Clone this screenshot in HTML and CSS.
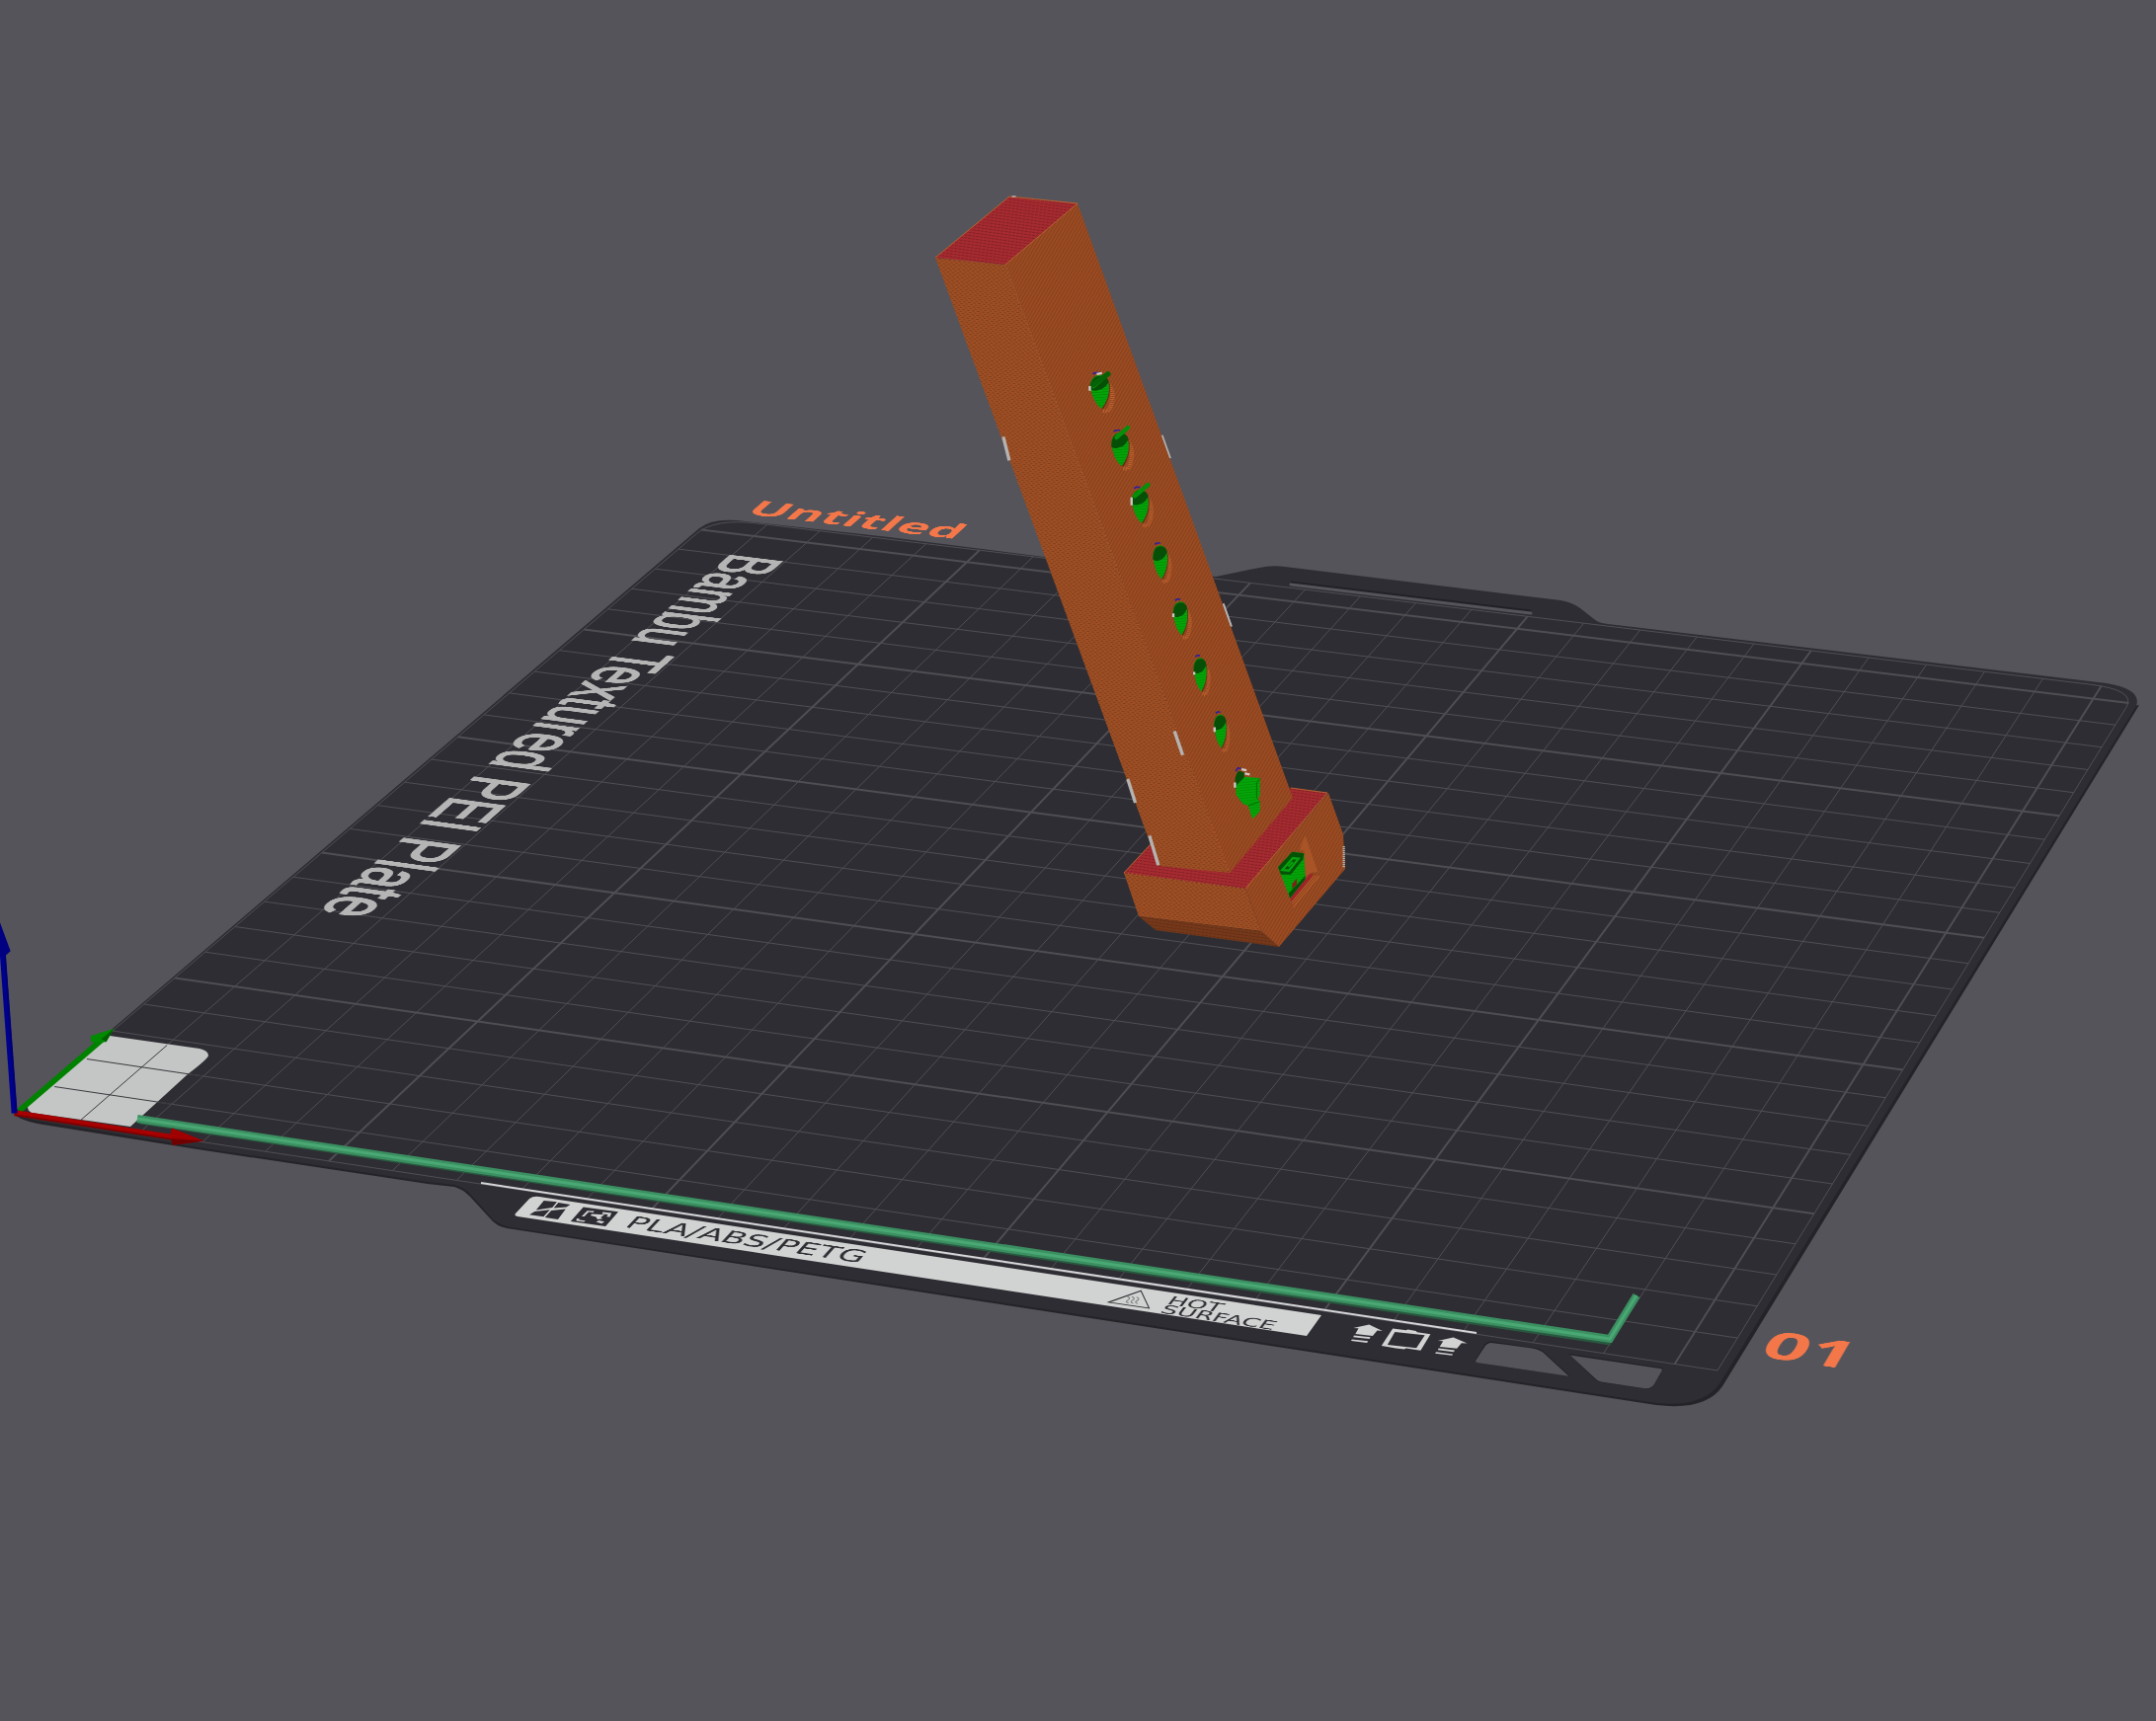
FILE: index.html
```html
<!DOCTYPE html>
<html lang="en">

<head>
  <meta charset="UTF-8">
  <title>Untitled</title>
  <link rel="stylesheet" href="styles.css">
</head>

<body>
  <main id="scene">
    <svg id="view" viewBox="0 0 2183 1743" aria-hidden="true">
      <defs>
        <pattern id="brick" width="5" height="4" patternUnits="userSpaceOnUse" patternTransform="rotate(7)">
          <rect width="5" height="4" fill="#a04f24" />
          <path d="M0 .5H3M2.500 2.500H5" stroke="#7d3f1d" />
        </pattern>
        <pattern id="layers" width="4" height="3" patternUnits="userSpaceOnUse" patternTransform="rotate(-60)">
          <rect width="4" height="3" fill="#9b4b22" />
          <path d="M0 .5H4" stroke="#86411d" />
        </pattern>
        <pattern id="top" width="4" height="3" patternUnits="userSpaceOnUse" patternTransform="rotate(8)">
          <rect width="4" height="3" fill="#a52b30" />
          <path d="M0 .5H3" stroke="#842027" />
        </pattern>
        <pattern id="under" width="4" height="3" patternUnits="userSpaceOnUse" patternTransform="rotate(8)">
          <rect width="4" height="3" fill="#75381a" />
          <path d="M0 .5H3" stroke="#642f15" />
        </pattern>
        <pattern id="support" width="6" height="8" patternUnits="userSpaceOnUse" patternTransform="rotate(-6)">
          <rect width="6" height="8" fill="#04a508" />
          <path d="M0 1H6" stroke="#048307" stroke-width="2" />
        </pattern>
        <g id="hole">
          <path class="rim" d="M16 -30Q30 -8 30 14Q28 50 18 60L8 58" />
          <path d="M-22 -20Q-20 -50 2 -51Q20 -48 24 -20Q26 20 8 53Q-18 30 -22 -20Z" fill="#5f2d14" />
          <path d="M-22 -20Q-20 -50 2 -51Q20 -48 22 -16Q24 20 4 52Q-18 30 -22 -20Z" fill="url(#support)" />
          <path d="M-22 -15Q-20 -48 0 -48Q18 -48 21 -30Q12 -8 -2 -6Q-12 0 -22 -8Z" fill="#064f07" />
          <path d="M-16 -54L-10 -58L0 -58" class="overhang" />
        </g>
      </defs>

      <!-- build plate -->
      <path class="plate-side" d="M14 1129Q26 1137 50 1140L200 1164L433 1199L460 1202Q468 1204 476 1212L499 1237Q506 1244 520 1245L1000 1319L1677 1423Q1727 1429 1744 1404L2166 714Z" />
      <path class="plate" d="M14 1127L708 535Q720 525 746 527L900 544L1057 564L1231 584L1275 575Q1288 572 1301 574L1580 608Q1592 610 1600 616L1614 627Q1618 631 1628 632L2133 692Q2169 698 2163 715L1742 1400Q1725 1426 1677 1421L1000 1317L517 1243Q505 1240 499 1235L475 1208Q468 1202 460 1200L433 1197L200 1162L50 1137Q26 1134 14 1127Z" />
      <path class="slot-shade" d="M1307 590L1550 619" />
      <path class="slot" d="M1307 592L1550 621" />

      <path id="gridThin" class="grid-thin" />
      <path id="gridBold" class="grid-bold" />

      <path class="patch" d="M111 1049L202 1062Q211 1064 211 1069Q211 1072 190 1088L132 1141L32 1127Q27 1124 28 1119Z" />
      <path id="gridPatch" class="grid-patch" />

      <!-- excluded area marker -->
      <path class="border-shade" d="M142 1136L1631 1360" />
      <path class="border" d="M139 1133L1630 1356L1657 1312" />
      <path class="border-shine" d="M139 1133L1630 1356L1657 1312" />

      <!-- front label strip -->
      <path class="front-line" d="M487 1198L1495 1350" />
      <path class="strip" d="M546 1212L1338 1332L1323 1353L524 1232Q520 1231 522 1229L536 1214Q540 1211 546 1212Z" />
      <g transform="translate(440 1160) scale(.357 .333)">
        <path class="ink" d="M310 168L347 172L334 189L288 197ZM284 201L327 196L309 217L269 211ZM351 174L385 180L374 188L338 191ZM331 198L372 194L350 225L313 219Z" />
        <path class="ink" d="M422 188L521 202L485 246L386 231Z" />
        <path class="chalk" d="M433 199L453 200L450 204L437 203L425 216L417 216ZM477 203L502 206L497 218L488 217L492 210L475 209ZM403 222L411 223L410 227L428 229L424 233L402 230ZM446 209L482 211L471 219L477 223L462 225L458 218L442 213ZM458 233L466 228L482 232L474 238Z" />
      </g>
      <g transform="translate(1000 1240) scale(.357 .333)">
        <path class="hot" d="M435 202L343 237L458 255Z" />
        <path class="steam" d="M396 219Q408 224 398 230T400 239M409 220Q421 225 411 231T413 240M422 221Q434 226 424 232T426 241" />
        <path class="chalk" d="M1082 305L1120 324L1105 323L1092 339L1043 333L1052 316L1037 315ZM1039 338L1086 343L1083 348L1037 343ZM1033 350L1079 355L1076 360L1031 354Z" />
        <path class="chalk" d="M1321 344L1360 362L1344 361L1331 378L1282 372L1292 355L1277 354ZM1279 377L1325 383L1322 388L1277 382ZM1272 388L1320 395L1317 399L1269 393Z" />
        <path class="chalk" fill-rule="evenodd" d="M1149 317L1187 322L1192 320L1215 324L1218 328L1256 334L1228 384L1186 377L1182 380L1158 377L1117 369ZM1155 327L1134 366L1216 376L1240 337Z" />
      </g>
      <g transform="translate(1400 1260) scale(.333)">
        <path class="cut-edge" d="M330 296L450 314Q475 316 487 325L570 402L290 361Q278 359 283 350L309 308Q316 297 330 296ZM566 333L850 376Q853 379 848 386L828 424Q818 443 798 440L660 420Q650 416 646 412Z" />
        <path class="cut" d="M330 300L450 316Q475 320 487 329L566 402L290 361Q278 359 284 352L311 311Q318 300 330 300ZM570 338L848 379Q851 382 847 388L826 426Q816 441 798 439L664 419Q654 416 650 412Z" />
      </g>

      <!-- axes -->
      <g transform="translate(0 900) scale(.333)">
        <path d="M58 676L315 455" stroke="#008200" stroke-width="17" />
        <path d="M346 426L276 448L277 468L323 466Z" fill="#008a00" />
        <path d="M346 426L308 458L323 466Z" fill="#005f00" />
        <path d="M44 682L525 756" stroke="#a80000" stroke-width="17" />
        <path d="M44 688L525 762" stroke="#7b0000" stroke-width="5" />
        <path d="M620 767L523 728Q512 752 526 780Z" fill="#a00000" />
        <path d="M620 767L519 760L526 780Z" fill="#700000" />
        <path d="M44 683L8 190" stroke="#00008f" stroke-width="18" />
        <path d="M49 683L13 190" stroke="#000073" stroke-width="6" />
        <path d="M0 103L32 190L18 203L0 206Z" fill="#000080" />
      </g>

      <!-- sliced model -->
      <path d="M1138 884L1261 900L1277 943L1153 928Z" fill="url(#brick)" />
      <path d="M1153 928L1277 943L1295 959L1170 942Z" fill="url(#under)" />
      <path d="M1307 798L1344 803L1261 900L1138 884L1165 855Z" fill="url(#top)" />
      <path d="M1261 900L1345 803L1360 845L1362 880L1295 959L1277 943Z" fill="url(#layers)" />
      <path d="M947 261L1018 268L1245 884L1173 877Z" fill="url(#brick)" />
      <path d="M1018 268L1091 206L1309 808L1245 884Z" fill="url(#layers)" />
      <path d="M1022 199L1091 206L1018 268L947 261Z" fill="url(#top)" />
      <path class="edge" d="M947 261L1022 199L1091 206L1018 268M1138 884L1165 855M1307 798L1344 803L1261 900" />
      <path class="beads" d="M1018 268L1245 884M1138 884L1261 900L1344 803" />

      <g transform="translate(900 180) scale(.333)">
        <use href="#hole" transform="translate(641 651) scale(1.300 1)" />
        <use href="#hole" transform="translate(703 826) scale(1.200 1)" />
        <use href="#hole" transform="translate(764 999) scale(1.150 1)" />
        <use href="#hole" x="825" y="1169" />
        <use href="#hole" x="886" y="1340" />
        <path class="rod" d="M622 634L667 596" stroke="#066206" />
        <path class="rod dark" d="M620 630L666 597" />
        <path class="rod" d="M692 790L727 760" />
        <path class="rod" d="M748 968L788 934" />
        <path class="seam-dot" d="M611 634V648M632 597L648 594M738 972V996M865 1325V1336" />
        <path class="seam" d="M348 788L366 860" />
        <path class="seam far" d="M831 783L856 853M1017 1295L1042 1365M374 57H386" />
      </g>
      <g transform="translate(1020 560) scale(.333)">
        <use href="#hole" transform="translate(586 370) scale(.9 1)" />
        <use href="#hole" transform="translate(647 542) scale(.85 1)" />
        <path class="seam-dot" d="M568 362V370M630 530V544" />
        <path d="M692 690Q697 660 708 664L720 668V765Q694 745 692 690Z" fill="#064f07" />
        <path class="overhang" d="M694 664L702 654L710 656" />
        <path d="M710 693L722 681L768 685V735L762 750L768 756V786L745 809L732 769L716 763L695 735V708Z" fill="url(#support)" />
        <path d="M768 686L758 700V742L762 750M732 769L768 756" fill="none" stroke="#046c06" stroke-width="3" />
        <path class="seam-dot" d="M692 698V714M712 658L727 661M722 671L737 674" />

        <path class="pocket" d="M905 858L888 905H902L906 985L925 972L944 970Z" />
        <path d="M866 1078L946 980L925 972L862 1050Z" fill="#8c421d" />
        <path d="M860 1050L920 976L930 980L864 1062Z" fill="#9e242a" />
        <path d="M864 1063L934 980M866 1070L942 980M868 1078L948 982" stroke="#c0622e" stroke-width="3" />
        <path d="M823 956L866 909L902 914L906 990L859 1050Z" fill="url(#support)" />
        <path d="M823 956L866 909L902 914L899 932L862 978L832 978Z" fill="#055106" />
        <path d="M836 964L868 928L885 930L856 966Z" fill="none" stroke="#08a00c" stroke-width="7" />
        <path d="M854 954L868 940" stroke="#08a00c" stroke-width="6" />
        <path d="M866 1006L880 990V1008L866 1022Z" fill="#7d2418" />
        <path d="M855 1035L906 982L905 994L859 1050Z" fill="#055106" />

        <path class="seam" d="M508 542L533 615M366 688L389 760M432 860L459 950" />
        <path class="seam far" d="M657 155L681 223" />
        <path class="seam beaded" d="M1023 892V958" />
      </g>
    </svg>

    <!-- text lying on the plate -->
    <div id="bed">
      <h1 class="label name">Untitled</h1>
      <p class="label plate-type">Bambu Textured PEI Plate</p>
      <p class="label materials">PLA/ABS/PETG</p>
      <p class="label warning">HOT<br>SURFACE</p>
      <p class="label number">01</p>
    </div>
  </main>
  <script src="plate.js"></script>
</body>

</html>
```
FILE: styles.css
```css
body {
  margin: 0;
  background-color: #55545a;
}

#scene {
  position: relative;
  overflow: hidden;
}

#view {
  display: block;
  width: 100%;
  height: auto;
}

.plate {
  fill: #2e2d33;
}

.plate-side {
  fill: #242328;
}

.slot {
  fill: none;
  stroke: #55545a;
  stroke-width: 3;
  stroke-linecap: round;
}

.slot-shade {
  fill: none;
  stroke: #222126;
  stroke-width: 3;
}

.grid-thin {
  fill: none;
  stroke: #504f54;
  stroke-width: 1;
}

.grid-bold {
  fill: none;
  stroke: #4f4e53;
  stroke-width: 2;
}

.patch {
  fill: #c4c6c5;
}

.grid-patch {
  fill: none;
  stroke: #3a393e;
  stroke-width: 1;
}

.border {
  fill: none;
  stroke: #3b8f61;
  stroke-width: 8;
}

.border-shade {
  fill: none;
  stroke: #28583f;
  stroke-width: 5;
}

.border-shine {
  fill: none;
  stroke: #4aa874;
  stroke-width: 3;
}

.front-line {
  fill: none;
  stroke: #d4d6d8;
  stroke-width: 2;
}

.strip,
.chalk {
  fill: #d1d3d2;
}

.ink {
  fill: #2e2d33;
}

.hot {
  fill: none;
  stroke: #2e2d33;
  stroke-width: 3;
}

.steam {
  fill: none;
  stroke: #77787a;
  stroke-width: 3;
}

.cut {
  fill: #55545a;
}

.cut-edge {
  fill: #222126;
}

/* model */
.edge {
  fill: none;
  stroke: #b5622f;
  stroke-width: 1;
}

.beads {
  fill: none;
  stroke: #c0652f;
  stroke-width: 1;
  stroke-dasharray: 1 3;
}

.rim {
  fill: none;
  stroke: #bd6230;
  stroke-width: 11;
  stroke-dasharray: 3 3;
}

.pocket {
  fill: #a85427;
}

.overhang {
  fill: none;
  stroke: #30209a;
  stroke-width: 5;
}

.rod {
  fill: none;
  stroke: #05900a;
  stroke-width: 13;
  stroke-linecap: round;
}

.rod.dark {
  stroke: #066206;
  stroke-width: 16;
}

.seam {
  fill: none;
  stroke: #b5b3b1;
  stroke-width: 10;
}

.seam.far {
  stroke-width: 5;
}

.seam.beaded {
  stroke-width: 7;
  stroke-dasharray: 4 2;
}

.seam-dot {
  fill: none;
  stroke: #cfcac8;
  stroke-width: 7;
}

/* 8px on the bed are 1mm, the corner of the plate is at 0 0 */
#bed {
  position: absolute;
  left: 0;
  top: 0;
  width: 0;
  height: 0;
  transform-origin: 0 0;
}

.label {
  position: absolute;
  margin: 0;
  white-space: nowrap;
}

.name,
.number {
  font-family: "Open Sans", "Noto Sans", sans-serif;
  font-weight: 700;
  color: #f4774a;
}

.name {
  left: 32px;
  top: -2148px;
  font-size: 78px;
  line-height: 80px;
}

.number {
  left: 2080px;
  top: -124px;
  font-size: 88px;
  line-height: 88px;
}

.plate-type {
  left: 60px;
  top: -1930px;
  font-family: "Liberation Sans", Arial, sans-serif;
  font-size: 111px;
  line-height: 111px;
  writing-mode: vertical-rl;
  color: #b4b5b4;
  -webkit-text-stroke: 3px #b4b5b4;
}

.materials,
.warning {
  font-family: "DejaVu Sans", sans-serif;
  color: #2e2d33;
}

.materials {
  left: 788px;
  top: 16px;
  font-size: 40px;
  line-height: 40px;
}

.warning {
  left: 1430px;
  top: 17px;
  font-size: 29px;
  line-height: 22px;
}
```
FILE: plate.js
```js
// camera: bed millimetres to view units
var cam = {
  a: 6.2582, b: 3.3818, c: 15.43,
  d: 0.6369, e: -1.91, f: 1128,
  g: -0.00027285, h: 0.00085
};
var size = 256;
var pxPerMm = 8;

function project(x, y) {
  var w = cam.g * x + cam.h * y + 1;
  var px = (cam.a * x + cam.b * y + cam.c) / w;
  var py = (cam.d * x + cam.e * y + cam.f) / w;
  return px.toFixed(1) + ' ' + py.toFixed(1);
}

function line(x1, y1, x2, y2) {
  return 'M' + project(x1, y1) + 'L' + project(x2, y2);
}

function drawGrid() {
  var thin = '';
  var bold = '';
  for (var i = 10; i <= 250; i += 10) {
    var both = line(i, 0, i, size) + line(0, i, size, i);
    if (i % 50 == 0) {
      bold += both;
    } else {
      thin += both;
    }
  }
  // outline with the two round corners at the back
  thin += 'M' + project(0, 0) + 'L' + project(0, 248) + 'Q' + project(0, size) + ' ' + project(8, size);
  thin += 'L' + project(248, size) + 'Q' + project(size, size) + ' ' + project(size, 248);
  thin += 'L' + project(size, 0) + 'Z';
  document.getElementById('gridThin').setAttribute('d', thin);
  document.getElementById('gridBold').setAttribute('d', bold);
  document.getElementById('gridPatch').setAttribute('d', line(10, 0, 10, 28) + line(1, 10, 20, 10) + line(1, 20, 20, 20));
}

function placeBed() {
  var s = document.getElementById('scene').clientWidth / 2183;
  var k = pxPerMm;
  var m = [
    cam.a * s / k, cam.d * s / k, 0, cam.g / k,
    -cam.b * s / k, -cam.e * s / k, 0, -cam.h / k,
    0, 0, 1, 0,
    cam.c * s, cam.f * s, 0, 1
  ];
  document.getElementById('bed').style.transform = 'matrix3d(' + m.map(function (n) { return n.toFixed(8); }).join(',') + ')';
}

drawGrid();
placeBed();
window.addEventListener('resize', placeBed);
```
